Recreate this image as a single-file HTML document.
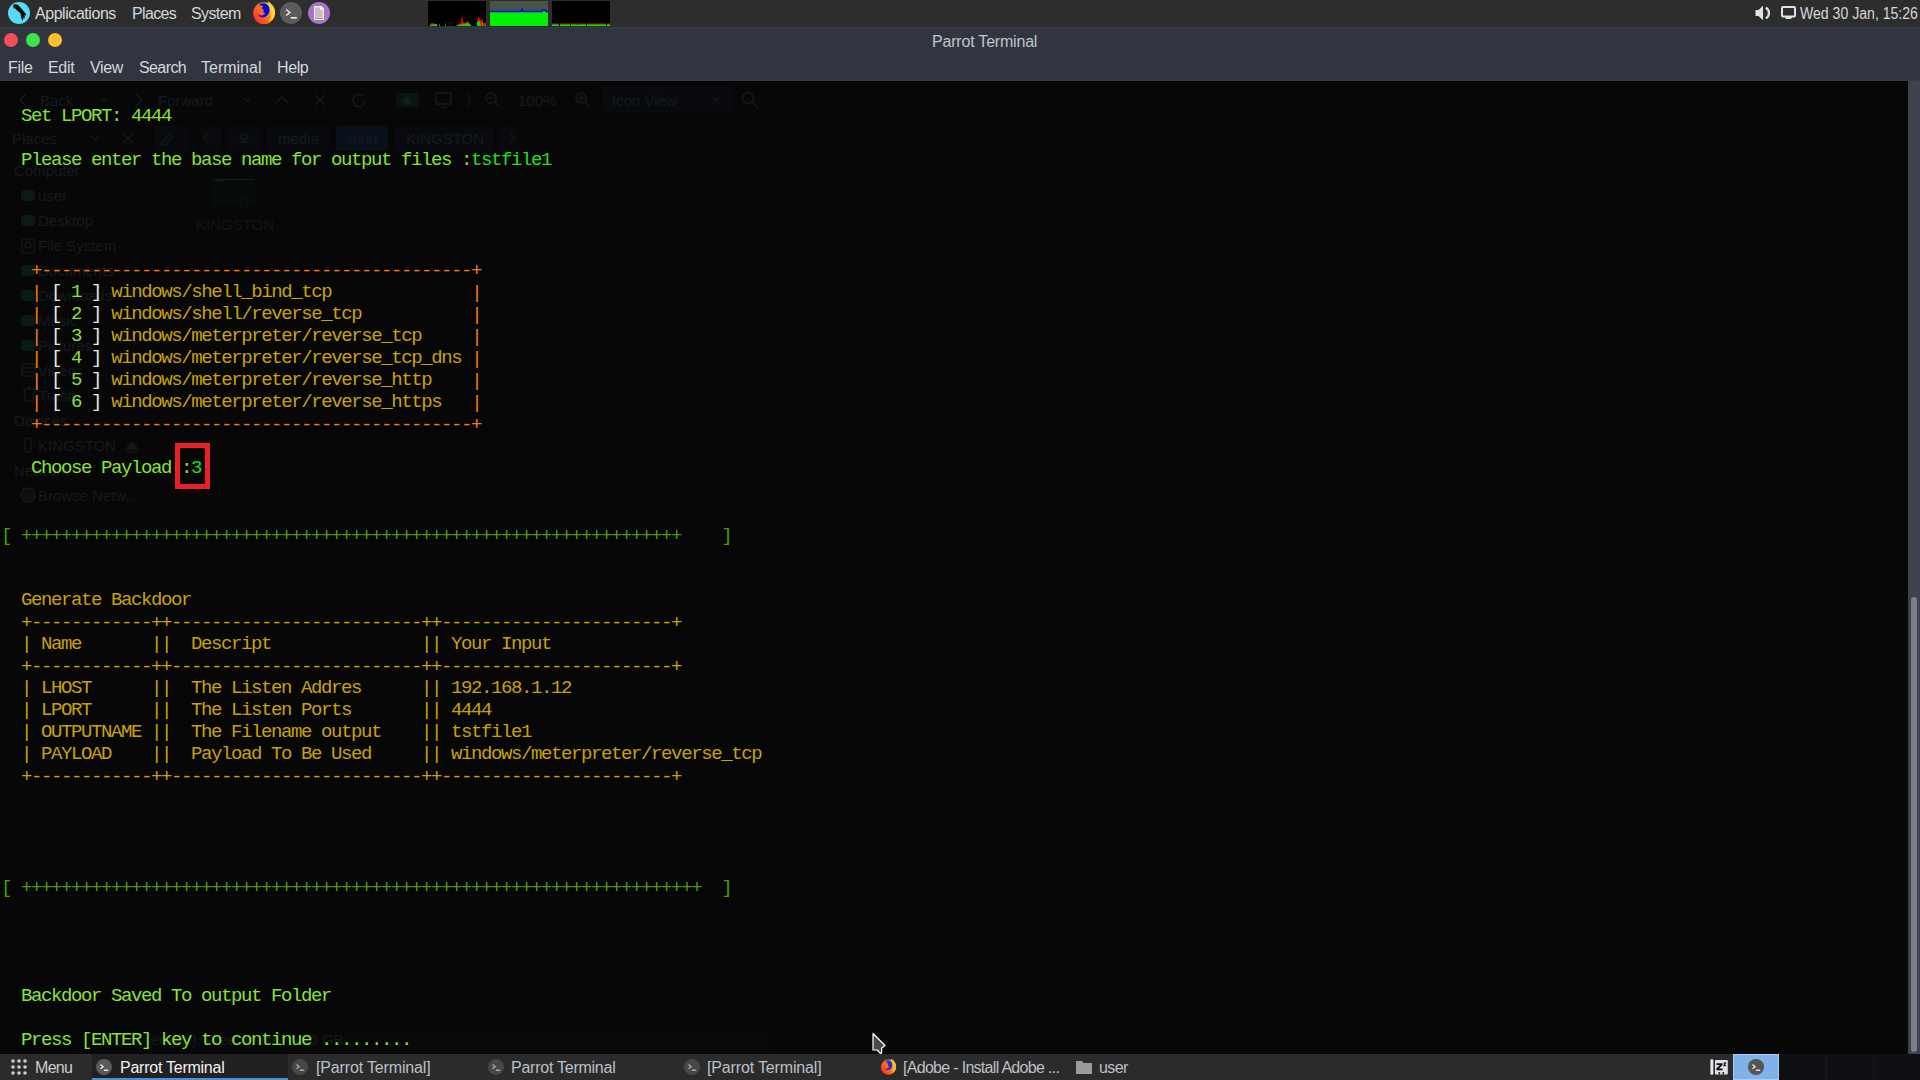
<!DOCTYPE html>
<html><head><meta charset="utf-8">
<style>
*{margin:0;padding:0;box-sizing:border-box}
html,body{width:1920px;height:1080px;overflow:hidden;background:#070707}
body{position:relative;font-family:"Liberation Sans",sans-serif}
.abs{position:absolute}
#top{left:0;top:0;width:1920px;height:27px;background:#2d2d2d}
#title{left:0;top:27px;width:1920px;height:54px;background:#31353f;border-top:1px solid #343948;border-bottom:1px solid #373b47}
#term{left:0;top:81px;width:1908px;height:973px;background:#070707;overflow:hidden}
#sb{left:1908px;top:81px;width:12px;height:973px;background:#3f434e}
#thumb{left:1911px;top:597px;width:6px;height:455px;background:#7b7f8a;border-radius:3px}
#task{left:0;top:1054px;width:1920px;height:26px;background:#2b2b2b}
.ui{color:#d4d7dc;font-size:16px;letter-spacing:-0.5px;white-space:nowrap;line-height:18px}
.gh{position:absolute;color:#161a1e;font-size:15px;white-space:nowrap;line-height:18px}
.ghb{position:absolute;background:#090a0d;border-radius:3px}
#txt{left:1px;top:105px;font-family:"Liberation Mono",monospace;font-size:19px;letter-spacing:-1.4px;line-height:22px;white-space:pre;color:#8ae234}
.g{color:#8ae234}.G{color:#1fe01f}.o{color:#f07a10}.w{color:#e8e8e4}.y{color:#c9a300}.d{color:#4e9a06;position:relative;top:2px}
.b1{position:relative;top:1px}
</style></head><body>
<div id="top" class="abs"></div>
<div id="title" class="abs"></div>
<div id="term" class="abs"></div>

<!-- ghost file manager (behind transparent terminal) -->
<div class="abs" style="left:0;top:81px;width:1908px;height:1px;background:#020202"></div>
<div class="abs" style="left:0;top:119px;width:775px;height:1px;background:#0a0a0b"></div>
<div class="abs" style="left:149px;top:120px;width:1px;height:180px;background:#090909"></div>
<div class="gh" style="left:40px;top:92px">Back</div>
<div class="gh" style="left:158px;top:92px">Forward</div>
<div class="gh" style="left:518px;top:92px">100%</div>
<div class="ghb" style="left:602px;top:86px;width:130px;height:26px"></div>
<div class="gh" style="left:612px;top:92px">Icon View</div>
<div class="ghb" style="left:396px;top:93px;width:23px;height:14px;background:#081510"></div><svg class="abs" style="left:401px;top:95px" width="12" height="11" viewBox="0 0 12 11"><path d="M1 6 L6 1 L11 6 L9.5 6 L9.5 10 L2.5 10 L2.5 6 Z" fill="#122018"/></svg>
<svg class="abs" style="left:15px;top:88px" width="760" height="24" viewBox="0 0 760 24" fill="none" stroke="#15191c" stroke-width="1.6">
 <path d="M11 6 L5 12 L11 18"/><path d="M86 10 L89 13 L92 10"/><path d="M121 6 L127 12 L121 18"/><path d="M229 10 L232 13 L235 10"/>
 <path d="M261 15 L267 9 L273 15"/><path d="M300 7 L310 17 M310 7 L300 17"/><path d="M348 8 A6 6 0 1 0 350 13"/>
 <rect x="421" y="5" width="15" height="11"/><path d="M426 19 L432 19"/><path d="M454 4 L454 20" stroke="#0f1214"/>
 <circle cx="476" cy="10" r="5"/><path d="M480 14 L485 19 M473 10 L479 10"/>
 <circle cx="566" cy="10" r="5"/><path d="M570 14 L575 19 M563 10 L569 10 M566 7 L566 13"/>
 <path d="M698 10 L701 13 L704 10"/>
 <circle cx="733" cy="10" r="5.5"/><path d="M737 14 L743 20"/>
</svg>
<div class="gh" style="left:12px;top:130px">Places</div>
<svg class="abs" style="left:88px;top:130px" width="50" height="16" viewBox="0 0 50 16" fill="none" stroke="#15191c" stroke-width="1.6"><path d="M3 6 L7 10 L11 6"/><path d="M35 3 L45 13 M45 3 L35 13"/></svg>
<div class="ghb" style="left:154px;top:126px;width:34px;height:25px"></div>
<div class="ghb" style="left:201px;top:126px;width:21px;height:25px"></div>
<div class="ghb" style="left:227px;top:126px;width:33px;height:25px"></div>
<div class="ghb" style="left:266px;top:126px;width:64px;height:25px"></div>
<div class="ghb" style="left:336px;top:126px;width:52px;height:25px;background:#08101a"></div>
<div class="ghb" style="left:394px;top:126px;width:100px;height:25px"></div>
<div class="ghb" style="left:499px;top:126px;width:20px;height:25px"></div>
<div class="gh" style="left:278px;top:130px">media</div>
<div class="gh" style="left:348px;top:130px;color:#0c1828;font-weight:bold">user</div>
<div class="gh" style="left:406px;top:130px">KINGSTON</div>
<div class="gh" style="left:14px;top:162px">Computer</div>
<div class="gh" style="left:38px;top:187px">user</div>
<div class="gh" style="left:38px;top:212px">Desktop</div>
<div class="gh" style="left:38px;top:237px">File System</div>
<div class="gh" style="left:38px;top:262px">Documents</div>
<div class="gh" style="left:38px;top:287px">Downloads</div>
<div class="gh" style="left:38px;top:312px">Music</div>
<div class="gh" style="left:38px;top:337px">Pictures</div>
<div class="gh" style="left:38px;top:362px">Videos</div>
<div class="gh" style="left:38px;top:387px">Trash</div>
<div class="gh" style="left:14px;top:412px">Devices</div>
<div class="gh" style="left:38px;top:437px">KINGSTON</div>
<div class="gh" style="left:14px;top:462px">Network</div>
<div class="gh" style="left:38px;top:487px">Browse Netw...</div>
<div class="ghb" style="left:21px;top:190px;width:14px;height:11px;background:#0a1a14"></div>
<div class="ghb" style="left:21px;top:215px;width:14px;height:11px;background:#0a1a14"></div>
<div class="ghb" style="left:21px;top:265px;width:14px;height:11px;background:#0a1a14"></div>
<div class="ghb" style="left:21px;top:290px;width:14px;height:11px;background:#0a1a14"></div>
<div class="ghb" style="left:21px;top:315px;width:14px;height:11px;background:#0a1a14"></div>
<div class="ghb" style="left:21px;top:340px;width:14px;height:11px;background:#0a1a14"></div>
<svg class="abs" style="left:210px;top:176px" width="46" height="36" viewBox="0 0 46 36"><path d="M1 1 L15 1 L16 2 L45 2 L45 30 L1 30 Z" fill="#060c09"/><path d="M3 5 L6 3 L44 3 L44 4 L16 4 L14 5.5 Z" fill="#151719"/><rect x="31" y="20" width="6" height="12" rx="1.5" fill="none" stroke="#101313" stroke-width="1.2"/></svg>
<div class="gh" style="left:196px;top:216px;color:#141516">KINGSTON</div>


<div class="abs" style="left:149px;top:1026px;width:626px;height:28px;background:#080808"></div>
<div class="gh" style="left:146px;top:1031px;color:#191919">(empty), Free space: 14.0 GB</div>

<svg class="abs" style="left:18px;top:236px" width="130" height="270" viewBox="0 0 130 270" fill="none" stroke="#13171a" stroke-width="1.5">
 <rect x="4" y="3" width="12" height="14" rx="2"/><circle cx="10" cy="9" r="3"/>
 <rect x="4" y="128" width="13" height="12"/><path d="M4 132 L17 132 M4 136 L17 136"/>
 <path d="M5 153 L17 153 M6 153 L7 165 L15 165 L16 153 M9 151 L13 151"/>
 <rect x="7" y="202" width="6" height="14" rx="2"/>
 <path d="M108 213 L114 206 L120 213 Z M108 216 L120 216" fill="#13171a"/>
 <circle cx="10" cy="259" r="7" fill="#0c0f14" stroke="#14181c"/>
</svg>
<svg class="abs" style="left:150px;top:124px" width="380" height="30" viewBox="0 0 380 30" fill="none" stroke="#13171a" stroke-width="1.5"><path d="M12 19 L20 9 L23 12 L15 21 Z M11 22 L12 19"/><path d="M59 9 L54 14 L59 19"/><circle cx="94" cy="13" r="3"/><path d="M89 20 C90 17 98 17 99 20"/><path d="M360 9 L365 14 L360 19"/></svg><div id="sb" class="abs"></div>
<div id="thumb" class="abs"></div>
<div id="task" class="abs"></div>


<!-- top panel -->
<div class="abs" style="left:8px;top:2px;width:22px;height:22px;border-radius:50%;background:#53dbf7"></div>
<svg class="abs" style="left:8px;top:1px" width="22" height="22" viewBox="0 0 22 22"><path d="M5.2 3.8 C6 3.1 8.6 3.1 10.2 4 L14.2 8.6 L17.9 13 L18.4 14.3 L16.9 14 L16.5 17.5 L15.5 16.8 L14.7 19.8 L13.6 17.9 L12.4 12.2 L9 9.2 L6.6 6.9 L5.6 7.8 Z" fill="#060606"/></svg>
<div class="abs ui" style="left:35px;top:5px;letter-spacing:-0.45px">Applications</div>
<div class="abs ui" style="left:132px;top:5px;letter-spacing:-0.65px">Places</div>
<div class="abs ui" style="left:191px;top:5px;letter-spacing:-0.6px">System</div>
<svg class="abs" style="left:252px;top:0px" width="24" height="26" viewBox="0 0 24 26">
 <defs><linearGradient id="ffg" x1="0" y1="0.9" x2="1" y2="0.1"><stop offset="0" stop-color="#ff2030"/><stop offset="0.45" stop-color="#ff6a18"/><stop offset="0.8" stop-color="#ffb820"/><stop offset="1" stop-color="#ffe838"/></linearGradient></defs>
 <circle cx="12" cy="13.2" r="11" fill="url(#ffg)"/>
 <path d="M9 3.5 C13 2.5 17 4.5 17.5 9 C18 14 14 18 9.5 17.5 C7 17 6 15 6 12 C6 8 6.5 4.5 9 3.5 Z" fill="#0008f0"/>
 <path d="M5.5 6 C7.5 4.8 10 5.2 11.2 6.8 L9.6 8 C11 9 12.6 10.5 11.2 12 L13.2 13.4 C11.6 15.4 9 16 7 15 C5.2 12 4.8 9 5.5 6 Z" fill="#ff6a1a"/>
 <path d="M15.5 1.2 C20 3 23.5 8 23 13 C22.5 17 20 20.5 17 21.5 C19.5 18 19.5 13 18.2 9.5 C17.6 6.5 16.6 3.5 15.5 1.2 Z" fill="#ffd82e"/>
</svg>
<div class="abs" style="left:280px;top:2px;width:22px;height:22px;border-radius:50%;background:#5b5b5b"></div>
<svg class="abs" style="left:280px;top:2px" width="22" height="22" viewBox="0 0 22 22"><path d="M6.2 7.5 L9.8 10.5 L6.2 13.5" stroke="#e6e6ea" stroke-width="1.6" fill="none"/><rect x="10.8" y="15" width="6" height="1.7" fill="#e6e6ea"/></svg>
<div class="abs" style="left:308px;top:2px;width:22px;height:22px;border-radius:50%;background:#a872c6"></div>
<svg class="abs" style="left:313px;top:6px" width="12" height="14" viewBox="0 0 12 14"><path d="M1 0 L8.5 0 L11 2.5 L11 14 L1 14 Z" fill="#efebdd"/><path d="M2 1.5 L7 1.5 L7 4 L9.5 4 L9.5 11 L2 11 Z" fill="#c9bcc6"/><path d="M7 1.5 L9.5 4 L7 4 Z" fill="#f5f3ea"/><rect x="2" y="11.8" width="8" height="0.9" fill="#6b6b6b"/></svg>
<!-- monitors -->
<svg class="abs" style="left:428px;top:1px" width="58" height="25" viewBox="0 0 58 25">
 <rect width="58" height="25" fill="#000"/>
 <path d="M2 25 L2 23 L4 22 L8 23 L9 25 Z M11 25 L11 22 L12 25 Z M17 25 L17 21 L18 25 Z M28 25 L28 22 L29 25 Z M30 25 L30 23 L33 22 L34 13 L35 21 L37 22 L40 20 L42 23 L43 25 Z M49 25 L49 20 L51 16 L53 20 L54 17 L55 22 L58 22 L58 25 Z" fill="#ff0000"/>
 <path d="M2 25 L2 24 L9 23 L9 25 Z M11 25 L11 23 L12 25 Z M17 25 L17 22 L18 25 Z M29 25 L30 24 L36 23 L40 22 L43 24 L43 25 Z M49 25 L49 21 L52 20 L53 25 Z M54 25 L54 18 L55 25 Z M58 25 L56 24 L58 24 Z" fill="#00e000"/>
</svg>
<svg class="abs" style="left:490px;top:1px" width="58" height="25" viewBox="0 0 58 25">
 <rect width="58" height="25" fill="#485448"/>
 <path d="M0 11 L31 11 L32 8.5 L33 11 L52 11 L53 9.5 L55 9.5 L56 11 L58 11 L58 25 L0 25 Z" fill="#00ee00"/>
 <path d="M0 10.5 L31 10.5 L32 8 L33 10.5 L52 10.5 L53 9 L55 9 L56 10.5 L58 10.5" stroke="#0000ff" stroke-width="1.3" fill="none"/>
</svg>
<svg class="abs" style="left:552px;top:1px" width="58" height="25" viewBox="0 0 58 25"><rect width="58" height="25" fill="#000"/><rect x="0" y="22.5" width="7" height="1.2" fill="#ff0000"/><rect x="0" y="23.5" width="7" height="1.5" fill="#00f000"/><rect x="8" y="22.5" width="10" height="1.2" fill="#ff0000"/><rect x="8" y="23.5" width="10" height="1.5" fill="#00f000"/><rect x="19" y="22.5" width="15" height="1.2" fill="#ff0000"/><rect x="19" y="23.5" width="15" height="1.5" fill="#00f000"/><rect x="35" y="22.5" width="19" height="1.2" fill="#ff0000"/><rect x="35" y="23.5" width="19" height="1.5" fill="#00f000"/><rect x="55" y="22.5" width="3" height="1.2" fill="#ff0000"/><rect x="55" y="23.5" width="3" height="1.5" fill="#00f000"/><circle cx="1.5" cy="22" r="0.8" fill="#0000ff"/><circle cx="13.5" cy="22" r="0.8" fill="#0000ff"/><circle cx="25.5" cy="23" r="0.8" fill="#0000ff"/><circle cx="37.5" cy="22" r="0.8" fill="#0000ff"/><circle cx="49.5" cy="22" r="0.8" fill="#0000ff"/></svg>
<!-- tray -->
<svg class="abs" style="left:1755px;top:5px" width="16" height="16" viewBox="0 0 16 16"><path d="M0.5 5 L3.5 5 L8 0.8 L8 15.2 L3.5 11 L0.5 11 Z" fill="#dfe2e6"/><path d="M10.8 2.8 C15 4.8 15 11.2 10.8 13.2" stroke="#dfe2e6" stroke-width="2.2" fill="none"/></svg>
<svg class="abs" style="left:1781px;top:6px" width="15" height="14" viewBox="0 0 15 14"><rect x="1" y="1" width="13" height="9.5" rx="1" fill="none" stroke="#dfe2e6" stroke-width="2"/><path d="M4 11 L11 11 L10 13 L5 13 Z" fill="#dfe2e6"/></svg>
<div class="abs ui" style="left:1800px;top:5px;letter-spacing:0px;transform:scaleX(0.88);transform-origin:0 0">Wed 30 Jan, 15:26</div>

<!-- title bar -->
<div class="abs" style="left:4px;top:33px;width:14px;height:14px;border-radius:50%;background:#f14f59"></div>
<div class="abs" style="left:26px;top:33px;width:14px;height:14px;border-radius:50%;background:#3ce34c"></div>
<div class="abs" style="left:48px;top:33px;width:14px;height:14px;border-radius:50%;background:#fcbf2e"></div>
<div class="abs ui" style="left:932px;top:33px;color:#bfc5ce;letter-spacing:-0.2px">Parrot Terminal</div>
<div class="abs ui" style="left:8px;top:59px;letter-spacing:-0.3px">File</div>
<div class="abs ui" style="left:48px;top:59px;letter-spacing:-0.3px">Edit</div>
<div class="abs ui" style="left:90px;top:59px;letter-spacing:-0.4px">View</div>
<div class="abs ui" style="left:139px;top:59px;letter-spacing:-0.6px">Search</div>
<div class="abs ui" style="left:201px;top:59px;letter-spacing:0px">Terminal</div>
<div class="abs ui" style="left:277px;top:59px;letter-spacing:-0.4px">Help</div>

<!-- red box -->
<div class="abs" style="left:175px;top:443px;width:35px;height:46px;border:5px solid #ea2029"></div>

<!-- taskbar -->
<div class="abs" style="left:92px;top:1054px;width:196px;height:26px;background:#212121"></div>
<div class="abs" style="left:92px;top:1078px;width:196px;height:2px;background:#4c90dd"></div>
<svg class="abs" style="left:10px;top:1058px" width="18" height="18" viewBox="0 0 18 18" fill="#c9cbd3"><circle cx="3" cy="3" r="1.8"/><circle cx="9" cy="3" r="1.8"/><circle cx="15" cy="3" r="1.8"/><circle cx="3" cy="9" r="1.8"/><circle cx="9" cy="9" r="1.8"/><circle cx="15" cy="9" r="1.8"/><circle cx="3" cy="15" r="1.8"/><circle cx="9" cy="15" r="1.8"/><circle cx="15" cy="15" r="1.8"/></svg>
<div class="abs ui" style="left:35px;top:1059px;letter-spacing:-0.7px;color:#c9ccd2">Menu</div>
<div class="abs" style="left:96px;top:1059px;width:16px;height:16px;border-radius:50%;background:#5a5a5a"></div><svg class="abs" style="left:96px;top:1059px" width="16" height="16" viewBox="0 0 22 22"><path d="M6.2 7.5 L9.8 10.5 L6.2 13.5" stroke="#e6e6ea" stroke-width="1.8" fill="none"/><rect x="10.8" y="14.5" width="6" height="2" fill="#e6e6ea"/></svg>
<div class="abs" style="left:292px;top:1059px;width:16px;height:16px;border-radius:50%;background:#474747"></div><svg class="abs" style="left:292px;top:1059px" width="16" height="16" viewBox="0 0 22 22"><path d="M6.2 7.5 L9.8 10.5 L6.2 13.5" stroke="#a8a8ac" stroke-width="1.8" fill="none"/><rect x="10.8" y="14.5" width="6" height="2" fill="#a8a8ac"/></svg>
<div class="abs" style="left:488px;top:1059px;width:16px;height:16px;border-radius:50%;background:#474747"></div><svg class="abs" style="left:488px;top:1059px" width="16" height="16" viewBox="0 0 22 22"><path d="M6.2 7.5 L9.8 10.5 L6.2 13.5" stroke="#a8a8ac" stroke-width="1.8" fill="none"/><rect x="10.8" y="14.5" width="6" height="2" fill="#a8a8ac"/></svg>
<div class="abs" style="left:684px;top:1059px;width:16px;height:16px;border-radius:50%;background:#474747"></div><svg class="abs" style="left:684px;top:1059px" width="16" height="16" viewBox="0 0 22 22"><path d="M6.2 7.5 L9.8 10.5 L6.2 13.5" stroke="#a8a8ac" stroke-width="1.8" fill="none"/><rect x="10.8" y="14.5" width="6" height="2" fill="#a8a8ac"/></svg>

<div class="abs ui" style="left:120px;top:1059px;color:#f2f2f2;letter-spacing:-0.25px">Parrot Terminal</div>
<div class="abs ui" style="left:316px;top:1059px;color:#bcc0c6;letter-spacing:-0.15px">[Parrot Terminal]</div>
<div class="abs ui" style="left:511px;top:1059px;color:#bcc0c6;letter-spacing:-0.25px">Parrot Terminal</div>
<div class="abs ui" style="left:707px;top:1059px;color:#bcc0c6;letter-spacing:-0.15px">[Parrot Terminal]</div>
<svg class="abs" style="left:880px;top:1058px" width="17" height="18" viewBox="0 0 24 26">
 <circle cx="12" cy="13.2" r="11" fill="url(#ffg)"/>
 <path d="M9 3.5 C13 2.5 17 4.5 17.5 9 C18 14 14 18 9.5 17.5 C7 17 6 15 6 12 C6 8 6.5 4.5 9 3.5 Z" fill="#2030d8"/>
 <path d="M5.5 6 C7.5 4.8 10 5.2 11.2 6.8 L9.6 8 C11 9 12.6 10.5 11.2 12 L13.2 13.4 C11.6 15.4 9 16 7 15 C5.2 12 4.8 9 5.5 6 Z" fill="#ff6a1a"/>
 <path d="M15.5 1.2 C20 3 23.5 8 23 13 C22.5 17 20 20.5 17 21.5 C19.5 18 19.5 13 18.2 9.5 C17.6 6.5 16.6 3.5 15.5 1.2 Z" fill="#ffb82e"/>
</svg>
<div class="abs ui" style="left:903px;top:1059px;color:#bcc0c6;letter-spacing:-0.7px">[Adobe - Install Adobe ...</div>
<svg class="abs" style="left:1076px;top:1060px" width="16" height="14" viewBox="0 0 16 14"><path d="M0 1 L6 1 L7.5 3 L16 3 L16 14 L0 14 Z" fill="#9a9a9a"/></svg>
<div class="abs ui" style="left:1099px;top:1059px;color:#bcc0c6;letter-spacing:-0.6px">user</div>
<svg class="abs" style="left:1710px;top:1059px" width="18" height="17" viewBox="0 0 18 17"><rect x="0.4" y="0.2" width="3" height="15.5" rx="1" fill="#e4e6ea"/><rect x="5" y="1" width="12.8" height="14.5" rx="1" fill="#dfe2e6"/><rect x="8.5" y="13" width="1.6" height="2.6" fill="#2b2b2b"/><rect x="12.5" y="13" width="1.6" height="2.6" fill="#2b2b2b"/><path d="M6.5 4.2 L12.5 4.2 L12.5 5.9 L9 9.6 L12.6 9.6 L12.6 11.3 L6.3 11.3 L6.3 9.6 L9.9 5.9 L6.5 5.9 Z" fill="#111"/><path d="M13.4 3.6 L16.2 3.6 L16.2 4.6 L14.8 6.3 L16.2 6.3 L16.2 7.3 L13.3 7.3 L13.3 6.3 L14.7 4.6 L13.4 4.6 Z" fill="#111"/></svg>
<div class="abs" style="left:1779px;top:1054px;width:141px;height:26px;background:#0f1014"></div>
<div class="abs" style="left:1826px;top:1054px;width:1px;height:26px;background:#17181c"></div>
<div class="abs" style="left:1873px;top:1054px;width:1px;height:26px;background:#17181c"></div>
<div class="abs" style="left:1733px;top:1054px;width:46px;height:26px;background:#80b1e9;border:1px solid #a9cdf3"></div>
<div class="abs" style="left:1748px;top:1059px;width:16px;height:16px;border-radius:50%;background:#555"></div>
<svg class="abs" style="left:1748px;top:1059px" width="16" height="16" viewBox="0 0 22 22"><path d="M6.2 7.5 L9.8 10.5 L6.2 13.5" stroke="#e6e6ea" stroke-width="1.8" fill="none"/><rect x="10.8" y="14.5" width="6" height="2" fill="#e6e6ea"/></svg>

<div id="txt" class="abs"><span class="g">  Set LPORT: 4444</span>

<span class="g">  Please enter the base name for output files :</span><span class="G">tstfile1</span>




<span class="o b1">   +-------------------------------------------+</span>
<span class="o b1">   |</span> <span class="w">[</span> <span class="g">1</span> <span class="w">]</span> <span class="y">windows/shell_bind_tcp</span>              <span class="o b1">|</span>
<span class="o b1">   |</span> <span class="w">[</span> <span class="g">2</span> <span class="w">]</span> <span class="y">windows/shell/reverse_tcp</span>           <span class="o b1">|</span>
<span class="o b1">   |</span> <span class="w">[</span> <span class="g">3</span> <span class="w">]</span> <span class="y">windows/meterpreter/reverse_tcp</span>     <span class="o b1">|</span>
<span class="o b1">   |</span> <span class="w">[</span> <span class="g">4</span> <span class="w">]</span> <span class="y">windows/meterpreter/reverse_tcp_dns</span> <span class="o b1">|</span>
<span class="o b1">   |</span> <span class="w">[</span> <span class="g">5</span> <span class="w">]</span> <span class="y">windows/meterpreter/reverse_http</span>    <span class="o b1">|</span>
<span class="o b1">   |</span> <span class="w">[</span> <span class="g">6</span> <span class="w">]</span> <span class="y">windows/meterpreter/reverse_https</span>   <span class="o b1">|</span>
<span class="o b1">   +-------------------------------------------+</span>

<span class="g">   Choose Payload :</span><span class="G">3</span>


<span class="d">[ ++++++++++++++++++++++++++++++++++++++++++++++++++++++++++++++++++    ]</span>


<span class="y">  Generate Backdoor
<span class="b1">  +------------++-------------------------++-----------------------+</span>
  | Name       ||  Descript               || Your Input
<span class="b1">  +------------++-------------------------++-----------------------+</span>
  | LHOST      ||  The Listen Addres      || 192.168.1.12
  | LPORT      ||  The Listen Ports       || 4444
  | OUTPUTNAME ||  The Filename output    || tstfile1
  | PAYLOAD    ||  Payload To Be Used     || windows/meterpreter/reverse_tcp
<span class="b1">  +------------++-------------------------++-----------------------+</span></span>




<span class="d">[ ++++++++++++++++++++++++++++++++++++++++++++++++++++++++++++++++++++  ]</span>




<span class="g">  Backdoor Saved To output Folder</span>

<span class="g">  Press [ENTER] key to continue .........</span></div>


<svg class="abs" style="left:860px;top:1026px" width="32" height="32" viewBox="860 1026 32 32"><path d="M873 1033.5 L873 1050 L877.3 1050 L880.5 1053.5 L881.6 1053 L881.6 1048.3 L885 1045.5 Z" fill="#4b4a4c" stroke="#fff" stroke-width="1.2" stroke-linejoin="round"/></svg>
</body></html>
